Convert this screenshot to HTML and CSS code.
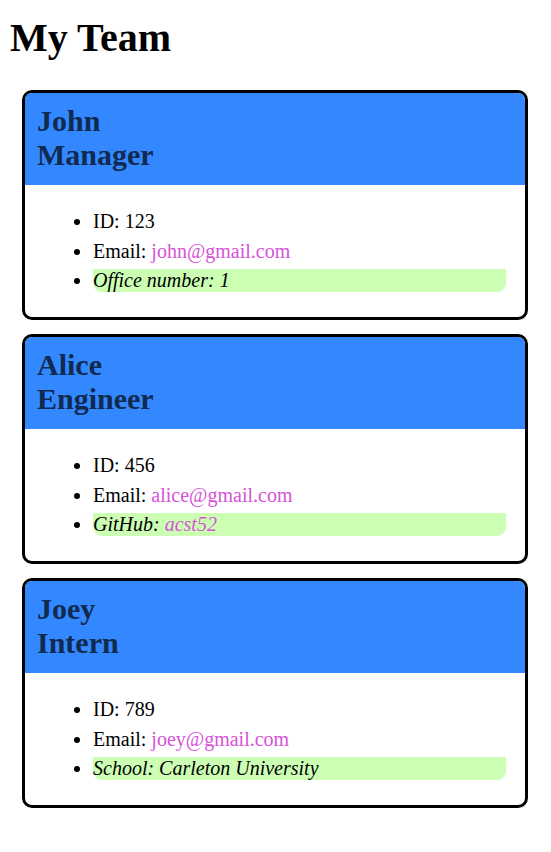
FILE: index.html
```html
<!DOCTYPE html>
<html lang="en">
<head>
<meta charset="utf-8">
<title>My Team</title>
<link rel="stylesheet" href="styles.css">
</head>
<body>
<h1 class="title">My Team</h1>
<main class="team">
  <section class="card">
    <header class="card-head"><h2 class="card-name">John<br>Manager</h2></header>
    <ul class="card-list">
      <li>ID: 123</li>
      <li>Email: <a class="link" href="#">john@gmail.com</a></li>
      <li class="extra">Office number: 1</li>
    </ul>
  </section>
  <section class="card">
    <header class="card-head"><h2 class="card-name">Alice<br>Engineer</h2></header>
    <ul class="card-list">
      <li>ID: 456</li>
      <li>Email: <a class="link" href="#">alice@gmail.com</a></li>
      <li class="extra">GitHub: <a class="link" href="#">acst52</a></li>
    </ul>
  </section>
  <section class="card">
    <header class="card-head"><h2 class="card-name">Joey<br>Intern</h2></header>
    <ul class="card-list">
      <li>ID: 789</li>
      <li>Email: <a class="link" href="#">joey@gmail.com</a></li>
      <li class="extra">School: Carleton University</li>
    </ul>
  </section>
</main>
</body>
</html>
```
FILE: styles.css
```css
html, body {
  background: #ffffff;
}
body {
  margin: 0;
  padding: 0 8px;
  font-family: "Liberation Serif", "Times New Roman", serif;
  color: #000;
}
.title {
  font-size: 40px;
  font-weight: bold;
  margin: 15px 0 0 0;
  padding-left: 2px;
  line-height: 46px;
}
.team {
  display: flex;
  flex-direction: column;
  gap: 14px;
  margin: 29px 15px 0 14px;
}
.card {
  border: 3px solid #000;
  border-radius: 10px;
  overflow: hidden;
  background: #fff;
}
.card-head {
  background: #3388ff;
  padding: 10.5px 12px 12.5px;
}
.card-name {
  margin: 0;
  font-size: 30px;
  line-height: 34.5px;
  font-weight: bold;
  color: #102a50;
}
.card-list {
  margin: 0;
  padding: 25px 19px 25px 68px;
  font-size: 20px;
  line-height: 23px;
}
.card-list li + li {
  margin-top: 6.5px;
}
.extra {
  background: #ccffb3;
  font-style: italic;
  border-radius: 0 0 9px 9px;
}
.link {
  color: #d653d6;
  text-decoration: none;
}
```
